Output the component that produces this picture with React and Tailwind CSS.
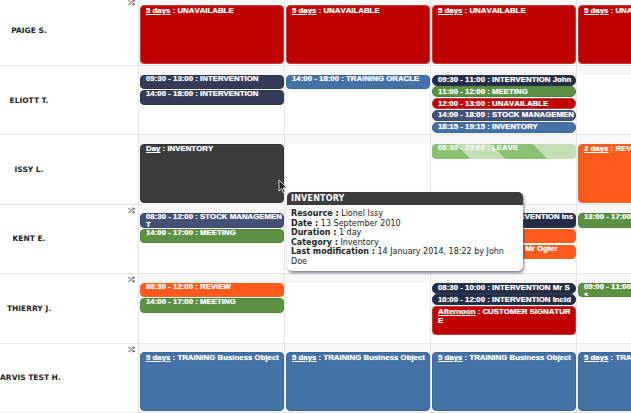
import React from 'react';
import { Shuffle } from 'lucide-react';

const colors = {
  red: 'bg-[#bf0000] border-[#c93a3a]',
  navy: 'bg-[#323c57] border-[#2b3550]',
  ink: 'bg-[#232c45] border-[#2b3550]',
  slate: 'bg-[#445074] border-[#3d486a]',
  blue: 'bg-[#4471a6] border-[#3b689f]',
  green: 'bg-[#5c9043] border-[#52873b]',
  orange: 'bg-[#fd5a1c] border-[#f4621f]',
  dark: 'bg-[#3c3c3c] border-[#333333]',
};

// shift pulls the text up inside the box, the short slots clip their first line
const Event = ({ color, when, label, underline, shift = '-mt-[0.5px]', className = '' }) => (
  <div
    className={`ml-px w-[144px] overflow-hidden rounded-[4px] border pl-[5px] font-['Liberation_Sans',Arial,sans-serif] text-[7.85px] leading-[9px] font-bold break-all text-white [font-kerning:none] [text-shadow:0_0_1px_rgba(255,255,255,0.7)] ${colors[color]} ${className}`}
  >
    <div className={shift}>
      <span className={underline ? 'underline' : ''}>{when}</span> : {label}
    </div>
  </div>
);

const Full = (props) => <Event {...props} underline className="h-[59px]" />;
const Slot = ({ color, when, label }) => (
  <Event color={color} when={when} label={label} shift="-mt-[1px] leading-[8px]" className="mb-[1.3px] h-[14.4px]" />
);
const Tiny = ({ color, when, label }) => (
  <Event color={color} when={when} label={label} shift="-mt-[0.5px]" className="mb-[0.8px] h-[11px] rounded-[5px]" />
);

const Leave = () => (
  <div className="ml-px h-[15px] w-[144px] overflow-hidden rounded-[4px] bg-[linear-gradient(45deg,#8bc270_27px,#c4dfb6_27px,#c4dfb6_52px,#8bc270_52px,#8bc270_82px,#c4dfb6_82px)] pl-[6px] font-['Liberation_Sans',Arial,sans-serif] text-[7.85px] leading-[9px] font-bold text-[#f4f9f1] [font-kerning:none] [text-shadow:0_0_1px_rgba(255,255,255,0.7)]">
    <div className="-mt-[1px]">08:30 - 20:00 : LEAVE</div>
  </div>
);

const Cell = ({ children }) => (
  <div className="overflow-hidden border-r border-[#e6e6e6]">
    <div className="h-[8.5px] bg-[#f8f8f8]" />
    {children}
  </div>
);

const Row = ({ name, icon, children }) => (
  <div className="relative grid h-[69.4px] grid-cols-[139px_146px_146px_146px_146px] border-b border-[#e6e6e6]">
    <div className="border-r border-[#e6e6e6]">
      <div className="flex h-full w-[58px] items-center justify-center font-['DejaVu_Sans',Verdana,sans-serif] text-[7.5px] font-bold whitespace-nowrap text-[#222222]">
        {name}
      </div>
    </div>
    {children}
    {icon && <Shuffle size={7} strokeWidth={2.5} className="absolute top-[2px] left-[128px] text-[#333333]" />}
  </div>
);

const Tooltip = () => (
  <div className="absolute top-[192px] left-[287px] z-10 w-[236px] overflow-hidden rounded-[5px] bg-white font-['DejaVu_Sans',Verdana,sans-serif] text-[8px] leading-[9.5px] text-[#222222] shadow-[1px_2px_3px_rgba(60,60,80,0.65)]">
    <div className="h-[13px] bg-[#3c3c3c] pl-[4px] text-[8px] leading-[13px] font-bold tracking-[0.2px] text-white">INVENTORY</div>
    <div className="px-[4px] pt-[4px] pb-[5px]">
      <p><b>Resource :</b> Lionel Issy</p>
      <p><b>Date :</b> 13 September 2010</p>
      <p><b>Duration :</b> 1 day</p>
      <p><b>Category :</b> Inventory</p>
      <p><b>Last modification :</b> 14 January 2014, 18:22 by John Doe</p>
    </div>
  </div>
);

const Cursor = () => (
  <svg className="absolute top-[179px] left-[278px] z-20" width="10" height="15" viewBox="0 0 10 15">
    <path d="M1 1v11l2.6-2.4 1.8 4.2 1.7-.8-1.8-4.1H9z" fill="#222222" stroke="#ffffff" strokeWidth="0.8" />
  </svg>
);

export default function App() {
  return (
    <div className="relative h-[413px] w-[631px] overflow-hidden bg-white">
      <div className="-mt-[3.4px]">
        <Row name="PAIGE S." icon>
          <Cell><Full color="red" when="5 days" label="UNAVAILABLE" /></Cell>
          <Cell><Full color="red" when="5 days" label="UNAVAILABLE" /></Cell>
          <Cell><Full color="red" when="5 days" label="UNAVAILABLE" /></Cell>
          <Cell><Full color="red" when="5 days" label="UNAVAILABLE" /></Cell>
        </Row>
        <Row name="ELIOTT T.">
          <Cell>
            <Slot color="navy" when="09:30 - 13:00" label="INTERVENTION" />
            <Slot color="navy" when="14:00 - 18:00" label="INTERVENTION" />
          </Cell>
          <Cell><Slot color="blue" when="14:00 - 18:00" label="TRAINING ORACLE" /></Cell>
          <Cell>
            <Tiny color="ink" when="09:30 - 11:00" label="INTERVENTION John" />
            <Tiny color="green" when="11:00 - 12:00" label="MEETING" />
            <Tiny color="red" when="12:00 - 13:00" label="UNAVAILABLE" />
            <Tiny color="slate" when="14:00 - 18:00" label="STOCK MANAGEMENT" />
            <Tiny color="blue" when="18:15 - 19:15" label="INVENTORY" />
          </Cell>
          <Cell />
        </Row>
        <Row name="ISSY L.">
          <Cell><Full color="dark" when="Day" label="INVENTORY" /></Cell>
          <Cell />
          <Cell><Leave /></Cell>
          <Cell><Full color="orange" when="2 days" label="REVIEW" /></Cell>
        </Row>
        <Row name="KENT E." icon>
          <Cell>
            <Slot color="slate" when="08:30 - 12:00" label="STOCK MANAGEMENT" />
            <Slot color="green" when="14:00 - 17:00" label="MEETING" />
          </Cell>
          <Cell />
          <Cell>
            <Slot color="ink" when="08:30 - 12:00" label="LI INTERVENTION Inspection" />
            <Slot color="orange" when="12:00 - 13:00" label="REVIEW" />
            <Slot color="orange" when="14:00 - 18:00" label="REVIEW Mr Ogler" />
          </Cell>
          <Cell><Slot color="green" when="13:00 - 17:00" label="MEETING" /></Cell>
        </Row>
        <Row name="THIERRY J." icon>
          <Cell>
            <Slot color="orange" when="08:30 - 12:00" label="REVIEW" />
            <Slot color="green" when="14:00 - 17:00" label="MEETING" />
          </Cell>
          <Cell />
          <Cell>
            <Tiny color="ink" when="08:30 - 10:00" label="INTERVENTION Mr Smith" />
            <Tiny color="ink" when="10:00 - 12:00" label="INTERVENTION Incident" />
            <Event color="red" when="Afternoon" label="CUSTOMER SIGNATURE" underline className="h-[29px]" />
          </Cell>
          <Cell><Slot color="green" when="09:00 - 11:00" label="MEETING Clients Visits" /></Cell>
        </Row>
        <Row name="JARVIS TEST H." icon>
          <Cell><Full color="blue" when="5 days" label="TRAINING Business Object" /></Cell>
          <Cell><Full color="blue" when="5 days" label="TRAINING Business Object" /></Cell>
          <Cell><Full color="blue" when="5 days" label="TRAINING Business Object" /></Cell>
          <Cell><Full color="blue" when="5 days" label="TRAINING Business Object" /></Cell>
        </Row>
      </div>
      <Tooltip />
      <Cursor />
    </div>
  );
}
